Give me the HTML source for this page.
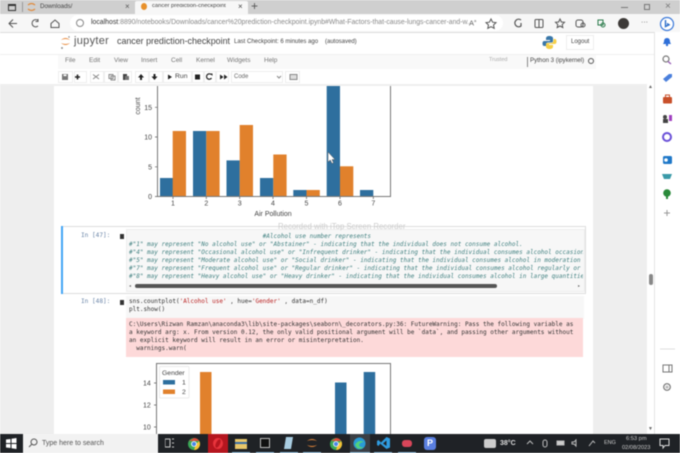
<!DOCTYPE html>
<html><head><meta charset="utf-8">
<style>
html,body{margin:0;padding:0;background:#fff}
#r{position:relative;width:680px;height:453px;overflow:hidden;font-family:"Liberation Sans",sans-serif;color:#444;background:#fff;filter:blur(.5px)}
#r div,#r svg{position:absolute}
.t{position:absolute;white-space:pre;line-height:1}
.m{font-family:"DejaVu Sans Mono","Liberation Mono",monospace;font-size:6px;white-space:pre;position:absolute;line-height:8px}
.b{background:#fff;border:1px solid #eee;box-sizing:border-box;height:12px;top:71px}
.c{font-style:italic;color:#408080}
.s{color:#ba2121}
</style></head><body>
<div id="r">
<!-- tabs -->
<div style="left:0;top:0;width:680px;height:14px;background:#cfcfcf"></div>
<div style="left:135px;top:1px;width:113px;height:13px;background:#f7f7f7;border-radius:2px 2px 0 0"></div>
<div style="left:8px;top:4px;width:8px;height:7px;border:1px solid #333;border-top-width:2px;box-sizing:border-box"></div>
<div style="left:22px;top:2px;width:1px;height:10px;background:#999"></div>
<svg style="left:27px;top:2px" width="9" height="10"><path d="M1 3Q4.5 0 8 3M1 7Q4.5 10 8 7" stroke="#e08a3c" fill="none" stroke-width="1.200"/></svg>
<span class="t" style="left:40px;top:4px;font-size:6.200px;color:#444">Downloads/</span>
<span class="t" style="left:125px;top:3px;font-size:8px;color:#555">×</span>
<div style="left:141px;top:3px;width:6px;height:7px;background:#e8902a;border-radius:50%"></div>
<span class="t" style="left:152px;top:4px;width:74px;overflow:hidden;font-size:5.800px;color:#444">cancer prediction-checkpoint - J</span>
<span class="t" style="left:238px;top:3px;font-size:8px;color:#444">×</span>
<span class="t" style="left:251px;top:0;font-size:12px;color:#555">+</span>
<div style="left:621px;top:7px;width:7px;height:1px;background:#777"></div>
<div style="left:644px;top:4px;width:6px;height:6px;border:1px solid #777;box-sizing:border-box"></div>
<span class="t" style="left:665px;top:2px;font-size:10px;color:#777">×</span>
<!-- address bar -->
<div style="left:0;top:14px;width:680px;height:18px;background:#f7f7f7"></div>
<div style="left:70px;top:15px;width:433px;height:16px;background:#fff;border-radius:8px"></div>
<svg style="left:8px;top:18px" width="60" height="11" fill="none" stroke="#555" stroke-width="1"><path d="M9 5.500H1M5 1.500L1 5.500L5 9.500"/><path d="M30 2.500A3.600 3.600 0 1 0 30 8M30 1V3.500H27.500"/><path d="M43 5.500L47 2L51 5.500V9.500H43Z"/></svg>
<div style="left:76px;top:19px;width:8px;height:8px;border:1px solid #888;border-radius:50%;box-sizing:border-box"></div>
<span class="t" style="left:91px;top:20px;font-size:6.900px;color:#888"><span style="color:#333">localhost</span>:8890/notebooks/Downloads/cancer%20prediction-checkpoint.ipynb#What-Factors-that-cause-lungs-cancer-and-w...</span>
<span class="t" style="left:469px;top:19px;font-size:7.500px;color:#666">A<sup style="font-size:4px">a</sup></span>
<svg style="left:485px;top:17px" width="125" height="13" fill="none" stroke="#555" stroke-width="1"><path d="M6 2L7.600 5.200L11 5.600L8.500 8L9.200 11.300L6 9.700L2.800 11.300L3.500 8L1 5.600L4.400 5.200Z"/><path d="M36 3A3.800 3.800 0 1 0 36 9V6" stroke-width="1.200"/><rect x="50" y="2.500" width="8" height="8" rx="1"/><path d="M54 2.500V10.500"/><path d="M75 2L76.400 5L79.500 5.300L77.200 7.500L77.800 10.500L75 9L72.200 10.500L72.800 7.500L70.500 5.300L73.600 5Z"/><rect x="91" y="3" width="7" height="7" rx="2"/><circle cx="98" cy="8" r="2"/><path d="M113 3H118V8H113Z" stroke="#2a7a4a"/><circle cx="118" cy="8" r="2" stroke="#2a7a4a"/></svg>
<div style="left:618px;top:18px;width:11px;height:11px;border-radius:50%;background:#3d3a38"></div>
<span class="t" style="left:641px;top:19px;font-size:7px;color:#555">···</span>
<div style="left:0;top:32px;width:655px;height:1px;background:#ddd"></div>
<!-- jupyter header -->
<svg style="left:60px;top:35px" width="12" height="15"><path d="M1 5Q5.500 1 10 5Q5.500 3 1 5ZM1 8Q5.500 12 10 8Q5.500 10 1 8Z" fill="#e8883a"/><circle cx="2" cy="13" r=".9" fill="#777"/><circle cx="9" cy="2" r=".7" fill="#777"/></svg>
<span class="t" style="left:74px;top:36px;font-size:11px;letter-spacing:.3px;color:#555">jupyter</span>
<span class="t" style="left:117px;top:37px;font-size:8.900px;color:#444">cancer prediction-checkpoint</span>
<span class="t" style="left:234px;top:39px;font-size:6px;color:#444">Last Checkpoint: 6 minutes ago</span>
<span class="t" style="left:325px;top:39px;font-size:6px;color:#444">(autosaved)</span>
<svg style="left:542px;top:35px" width="15" height="15" viewBox="0 0 15 15"><path d="M7.500 1C5 1 4 2 4 3.500V5H8V6H2.500C1 6 .5 7 .5 8.500S1 11 2.500 11H4V9.500C4 8 5 7.500 6 7.500H9.500C10.500 7.500 11 7 11 6V3C11 2 9.500 1 7.500 1Z" fill="#3a77a8"/><path d="M7.500 14C10 14 11 13 11 11.500V10H7V9H12.500C14 9 14.500 8 14.500 6.500S14 4 12.500 4H11.500V5.500C11.500 7 10.500 8 9 8H5.500C4.500 8 4 8.500 4 9.500V12C4 13 5.500 14 7.500 14Z" fill="#f5cf47"/></svg>
<div style="left:566px;top:35px;width:28px;height:15px;border:1px solid #eee;box-sizing:border-box;background:#fff"></div>
<span class="t" style="left:571px;top:39px;font-size:6px;color:#444">Logout</span>
<!-- menu -->
<div style="left:0;top:54px;width:655px;height:1px;background:#f0f0f0"></div>
<div style="left:58px;top:55px;width:538px;height:14px;background:#f9f9f9"></div>
<span class="t" style="left:65px;top:58px;font-size:6.500px;color:#777">File</span>
<span class="t" style="left:89px;top:58px;font-size:6.500px;color:#777">Edit</span>
<span class="t" style="left:114px;top:58px;font-size:6.500px;color:#777">View</span>
<span class="t" style="left:141px;top:58px;font-size:6.500px;color:#777">Insert</span>
<span class="t" style="left:171px;top:58px;font-size:6.500px;color:#777">Cell</span>
<span class="t" style="left:196px;top:58px;font-size:6.500px;color:#777">Kernel</span>
<span class="t" style="left:227px;top:58px;font-size:6.500px;color:#777">Widgets</span>
<span class="t" style="left:264px;top:58px;font-size:6.500px;color:#777">Help</span>
<span class="t" style="left:489px;top:58px;font-size:5.500px;color:#aaa">Trusted</span>
<div style="left:527px;top:57px;width:1px;height:10px;background:#888"></div>
<span class="t" style="left:530px;top:58px;font-size:6.100px;color:#444">Python 3 (ipykernel)</span>
<div style="left:588px;top:58px;width:6px;height:6px;border:1px solid #555;border-radius:50%;box-sizing:border-box"></div>
<!-- toolbar -->
<div class="b" style="left:58px;width:15px"></div><div class="b" style="left:74px;width:13px"></div>
<div class="b" style="left:90px;width:14px"></div><div class="b" style="left:104px;width:14px"></div><div class="b" style="left:118px;width:14px"></div>
<div class="b" style="left:135px;width:14px"></div><div class="b" style="left:149px;width:14px"></div>
<div class="b" style="left:163px;width:29px"></div><div class="b" style="left:192px;width:12px"></div><div class="b" style="left:204px;width:12px"></div><div class="b" style="left:216px;width:13px"></div>
<div class="b" style="left:231px;width:52px"></div><div class="b" style="left:285px;width:15px"></div>
<svg style="left:58px;top:71px" width="245" height="12">
<rect x="4" y="3" width="6" height="6" fill="#777"/><rect x="5.500" y="3.500" width="3" height="1.600" fill="#fff"/>
<path d="M35 3.500L41 8M35 8L41 3.500" stroke="#888"/><rect x="51" y="3.500" width="4" height="4" fill="none" stroke="#888"/><rect x="53" y="5" width="4" height="4" fill="none" stroke="#888"/>
<rect x="65" y="3" width="4" height="6" fill="#444"/><rect x="67" y="5" width="4" height="4" fill="#777"/>
<path d="M83 3L80 6.500H82V9H84V6.500H86Z" fill="#222"/><path d="M96.500 9L93.500 5.500H95.500V3H97.500V5.500H99.500Z" fill="#222"/>
<path d="M110 3.500L114 6L110 8.500Z" fill="#222"/>
<rect x="137" y="3.500" width="5" height="5" fill="#222"/>
<path d="M153 3.500A2.700 2.700 0 1 0 153.500 7" fill="none" stroke="#222" stroke-width="1.200"/><path d="M152 2.500L154.500 2.500V5Z" fill="#222"/>
<path d="M162 3.500L165.500 6L162 8.500ZM166 3.500L169.500 6L166 8.500Z" fill="#222"/>
<path d="M219 5L221 7L223 5" stroke="#888" fill="none"/>
<rect x="232" y="3.500" width="7" height="5" fill="#ddd" stroke="#888"/>
<path d="M19.500 3.500V8.500M17 6H22" stroke="#222" stroke-width="1.500"/>
</svg>
<span class="t" style="left:175px;top:74px;font-size:6.800px;color:#444">Run</span>
<span class="t" style="left:234px;top:74px;font-size:6px;color:#666">Code</span>
<!-- page background -->
<div style="left:0;top:86px;width:54px;height:348px;background:#eeeeee"></div>
<div style="left:593px;top:86px;width:54px;height:348px;background:#eeeeee"></div>
<div style="left:0;top:84px;width:647px;height:2px;background:#efefef"></div>
<!-- side scroll -->
<div style="left:654px;top:32px;width:1px;height:402px;background:#e4e4e4"></div>
<span class="t" style="left:648px;top:85px;font-size:5px;color:#666">▲</span>
<span class="t" style="left:648px;top:427px;font-size:5px;color:#666">▼</span>
<div style="left:649px;top:274px;width:4px;height:11px;background:#888;border-radius:2px"></div>
<!-- chart 1 -->
<svg style="left:120px;top:86px" width="300" height="140">
<g fill="#2e6f9e">
<rect x="40" y="92" width="13" height="18"/><rect x="73" y="45" width="13.300" height="65"/><rect x="106.500" y="74.400" width="13.300" height="35.600"/><rect x="140" y="92" width="13.300" height="18"/><rect x="173.300" y="104" width="13.300" height="6"/><rect x="206.700" y="-1" width="13.300" height="111"/><rect x="240" y="104" width="13.300" height="6"/></g>
<g fill="#e1812c">
<rect x="52.700" y="45" width="13.300" height="65"/><rect x="86.300" y="45" width="13.300" height="65"/><rect x="119.700" y="39" width="13.300" height="71"/><rect x="153.300" y="68.500" width="13.300" height="41.500"/><rect x="186.500" y="104" width="13.300" height="6"/><rect x="220" y="80.300" width="13.300" height="29.700"/></g>
<path d="M37.500 0V110.500H270.500V0" fill="none" stroke="#777" stroke-width="1"/>
<path d="M35 110.500H37M35 80.800H37M35 51H37M35 21.300H37M53 111V113M86.300 111V113M119.700 111V113M153 111V113M186.500 111V113M220 111V113M253.300 111V113" stroke="#555" stroke-width=".7"/>
<g font-family="Liberation Sans,sans-serif" font-size="7" fill="#444" text-anchor="middle">
<text x="53" y="119.500">1</text><text x="86.300" y="119.500">2</text><text x="119.700" y="119.500">3</text><text x="153" y="119.500">4</text><text x="186.500" y="119.500">5</text><text x="220" y="119.500">6</text><text x="253.300" y="119.500">7</text>
<text x="153" y="130">Air Pollution</text>
<text x="32" y="113" text-anchor="end">0</text><text x="32" y="83.300" text-anchor="end">5</text><text x="32" y="53.500" text-anchor="end">10</text><text x="32" y="24" text-anchor="end">15</text>
<text transform="translate(20,20) rotate(-90)" x="0" y="0">count</text></g>
<path d="M208 66V76L210.300 74L212 77.500L213.500 76.800L212 73.500H215Z" fill="#fff" stroke="#555" stroke-width=".5"/>
</svg>
<!-- cell 47 -->
<div style="left:61px;top:226px;width:525px;height:68px;border:1px solid #ddd;box-sizing:border-box;background:#fff"></div>
<div style="left:61px;top:226px;width:2px;height:68px;background:#42a5f5"></div>
<div style="left:126px;top:229px;width:459px;height:63px;background:#f7f7f7;border:1px solid #eee;box-sizing:border-box"></div>
<span class="t" style="left:278px;top:223px;font-size:7.800px;color:#ccc">Recorded with iTop Screen Recorder</span>
<span class="m" style="left:81px;top:232px;color:#6a85a8;font-size:6.100px">In [47]:</span>
<div style="left:120px;top:234px;width:4px;height:5px;background:#333"></div>
<div style="left:129px;top:232px;width:454px;height:50px;overflow:hidden">
<span class="m c" style="left:0;top:1px">                                     #Alcohol use number represents
#"1" may represent "No alcohol use" or "Abstainer" - indicating that the individual does not consume alcohol.
#"4" may represent "Occasional alcohol use" or "Infrequent drinker" - indicating that the individual consumes alcohol occasionally
#"5" may represent "Moderate alcohol use" or "Social drinker" - indicating that the individual consumes alcohol in moderation
#"7" may represent "Frequent alcohol use" or "Regular drinker" - indicating that the individual consumes alcohol regularly or
#"8" may represent "Heavy alcohol use" or "Heavy drinker" - indicating that the individual consumes alcohol in large quantities</span>
</div>
<div style="left:135px;top:284px;width:362px;height:4px;background:#555;border-radius:2px"></div>
<span class="t" style="left:129px;top:284px;font-size:4px;color:#666">◂</span>
<span class="t" style="left:578px;top:284px;font-size:4px;color:#666">▸</span>
<!-- cell 48 -->
<div style="left:126px;top:296px;width:458px;height:23px;background:#f7f7f7"></div>
<span class="m" style="left:81px;top:298px;color:#6a85a8;font-size:6.100px">In [48]:</span>
<div style="left:120px;top:300px;width:4px;height:5px;background:#333"></div>
<span class="m" style="left:129px;top:298px;color:#333">sns.countplot(<span class="s">'Alcohol use'</span> , hue=<span class="s">'Gender'</span> , data=n_df)
plt.show()</span>
<div style="left:126px;top:318px;width:457px;height:39px;background:#fdd9d9"></div>
<span class="m" style="left:129px;top:321px;color:#333">C:\Users\Rizwan Ramzan\anaconda3\lib\site-packages\seaborn\_decorators.py:36: FutureWarning: Pass the following variable as
a keyword arg: x. From version 0.12, the only valid positional argument will be `data`, and passing other arguments without
an explicit keyword will result in an error or misinterpretation.
  warnings.warn(</span>
<!-- chart 2 -->
<svg style="left:130px;top:360px" width="270" height="74">
<rect x="70" y="12" width="11.500" height="62" fill="#e1812c"/>
<rect x="205" y="22.500" width="11.500" height="52" fill="#2e6f9e"/>
<rect x="233.700" y="12" width="11.500" height="62" fill="#2e6f9e"/>
<path d="M26.500 74V3.500H260.500V74" fill="none" stroke="#777" stroke-width="1"/>
<path d="M24 23H26M24 45H26M24 67H26" stroke="#555" stroke-width=".7"/>
<rect x="29.500" y="6.500" width="29.500" height="31.500" fill="#fff" stroke="#e4e4e4" stroke-width=".7" rx="1"/>
<rect x="33" y="20" width="12" height="4.500" fill="#2e6f9e"/><rect x="33" y="29.500" width="12" height="4.500" fill="#e1812c"/>
<g font-family="Liberation Sans,sans-serif" font-size="6.800" fill="#444"><text x="32" y="15">Gender</text><text x="52" y="24.500">1</text><text x="52" y="34">2</text>
<text x="13" y="25.500" font-size="7">14</text><text x="13" y="47.500" font-size="7">12</text><text x="13" y="69.500" font-size="7">10</text></g>
</svg>
<!-- taskbar -->
<div style="left:0;top:434px;width:680px;height:19px;background:#1f2226"></div>
<div style="left:23px;top:434px;width:135px;height:19px;background:#f2f2f2"></div>
<svg style="left:6px;top:438px" width="11" height="11"><path d="M0 1.500L4.500 1V5H0ZM5.500 .8L10.500 0V5H5.500ZM0 6H4.500V10L0 9.500ZM5.500 6H10.500V11L5.500 10.200Z" fill="#fff"/></svg>
<svg style="left:28px;top:438px" width="10" height="10"><circle cx="6" cy="4" r="3" fill="none" stroke="#555"/><path d="M3.800 6.200L1 9" stroke="#555"/></svg>
<span class="t" style="left:42px;top:440px;font-size:7px;color:#555">Type here to search</span>
<svg style="left:165px;top:438px" width="10" height="10"><rect x="0" y="1" width="5" height="8" fill="none" stroke="#ccc"/><path d="M7 1H9M7 5H9M7 9H9" stroke="#ccc"/></svg>
<div style="left:208px;top:434px;width:20px;height:19px;background:#b5161f"></div>
<div style="left:350px;top:434px;width:20px;height:19px;background:#3b3f45"></div>
<svg style="left:185px;top:436px" width="18" height="16"><circle cx="9" cy="8" r="6" fill="#3aa757"/><path d="M9 2A6 6 0 0 1 14.200 5H4Z" fill="#de4b3a"/><path d="M14.200 5A6 6 0 0 1 9 14L11 8Z" fill="#f5c336"/><circle cx="9" cy="8" r="2.500" fill="#4a86e8" stroke="#fff" stroke-width=".8"/></svg>
<svg style="left:327px;top:436px" width="18" height="16"><circle cx="9" cy="8" r="6" fill="#3aa757"/><path d="M9 2A6 6 0 0 1 14.200 5H4Z" fill="#de4b3a"/><path d="M14.200 5A6 6 0 0 1 9 14L11 8Z" fill="#f5c336"/><circle cx="9" cy="8" r="2.500" fill="#4a86e8" stroke="#fff" stroke-width=".8"/></svg>
<svg style="left:212px;top:437px" width="12" height="13"><ellipse cx="6" cy="6.500" rx="5" ry="5.500" fill="#e8343c"/><ellipse cx="6" cy="6.500" rx="2" ry="4.500" fill="#b5161f" transform="rotate(25 6 6.500)"/></svg>
<svg style="left:235px;top:437px" width="12" height="13"><rect x="0" y="2" width="12" height="10" fill="#e8c76a"/><rect x="0" y="5" width="12" height="2" fill="#3a6ea5"/></svg>
<div style="left:260px;top:438px;width:10px;height:10px;background:#111;border:1px solid #bbb;box-sizing:border-box"></div>
<svg style="left:283px;top:437px" width="11" height="13"><path d="M3 0H10L8 12H1Z" fill="#a9cde2"/></svg>
<svg style="left:306px;top:437px" width="12" height="13"><path d="M1 4Q6 0 11 4Q6 2 1 4ZM1 8Q6 12 11 8Q6 10 1 8Z" fill="#e8883a"/></svg>
<svg style="left:352px;top:436px" width="15" height="15"><circle cx="7.500" cy="7.500" r="6" fill="#2a9bd6"/><path d="M3 9Q6 3 12 6Q8 6 7 9Q8 12 12 11Q8 14 5 12Z" fill="#52d17c"/></svg>
<svg style="left:377px;top:436px" width="13" height="14"><path d="M9.500 1L13 2.500V11.500L9.500 13L3 7.500Z M9.500 4.500L6 7.500L9.500 10Z M0 5L1.500 4L4 6.500L1.500 10L0 9Z" fill="#2f9ce0" fill-rule="evenodd"/></svg>
<div style="left:402px;top:440px;width:10px;height:7px;background:#d9465a;border-radius:3px"></div>
<div style="left:424px;top:437px;width:12px;height:13px;background:#5a7fe0;border-radius:3px;color:#fff;font-size:9px;font-weight:bold;text-align:center;line-height:13px">P</div>
<div style="left:232px;top:452px;width:18px;height:1px;background:#7fb0d0"></div>
<div style="left:256px;top:452px;width:18px;height:1px;background:#7fb0d0"></div>
<div style="left:280px;top:452px;width:18px;height:1px;background:#7fb0d0"></div>
<div style="left:303px;top:452px;width:18px;height:1px;background:#7fb0d0"></div>
<div style="left:350px;top:452px;width:20px;height:1px;background:#7fb0d0"></div>
<div style="left:374px;top:452px;width:18px;height:1px;background:#7fb0d0"></div>
<div style="left:398px;top:452px;width:18px;height:1px;background:#7fb0d0"></div>
<div style="left:484px;top:439px;width:12px;height:9px;background:#ccc;border-radius:2px"></div>
<span class="t" style="left:500px;top:440px;font-size:7px;font-weight:bold;color:#ddd">38°C</span>
<svg style="left:526px;top:438px" width="80" height="10" fill="none" stroke="#bbb"><path d="M1 6L4 3L7 6"/><rect x="17" y="2" width="4" height="7" rx="2"/><rect x="31" y="3" width="7" height="4" fill="#ccc"/><path d="M46 4H48L50 2V8L48 6H46Z"/><path d="M63 8L67 3L69 5"/></svg>
<span class="t" style="left:604px;top:441px;font-size:5.500px;color:#ccc">ENG</span>
<span class="t" style="left:626px;top:437px;font-size:5.700px;color:#ccc">6:53 pm</span>
<span class="t" style="left:622px;top:446px;font-size:5.700px;color:#ccc">02/08/2023</span>
<svg style="left:659px;top:438px" width="11" height="11"><path d="M1 1H10V7.500H6L4 10V7.500H1Z" fill="none" stroke="#ddd"/></svg>
<!-- edge sidebar -->
<svg style="left:655px;top:14px" width="25" height="420">
<circle cx="12" cy="10" r="6.500" fill="#fff" stroke="#3a78d8" stroke-width="1.200"/><path d="M10.500 6V12.500L14 10.800L12 9.500" fill="none" stroke="#2a6cc8" stroke-width="1.400"/>
<path d="M12 24C9.500 24 9 26 9 28L8 30H16L15 28C15 26 14.500 24 12 24Z" fill="#2f6fd8"/><circle cx="12" cy="31" r="1.200" fill="#2f6fd8"/>
<circle cx="11" cy="45" r="3" fill="none" stroke="#777" stroke-width="1.200"/><path d="M13 47.500L16 50" stroke="#9a5fb8" stroke-width="1.400"/>
<path d="M8 65L14 60H17V63L11 68Z" fill="#4a7fdc"/>
<rect x="8" y="83" width="9" height="6.500" fill="#c8502a" rx="1"/><path d="M10.500 83V81H14.500V83" fill="none" stroke="#c8502a"/>
<circle cx="10" cy="103" r="2" fill="#444"/><rect x="8" y="105" width="5" height="4" fill="#444"/><rect x="14" y="101" width="3" height="6" fill="#a040c0"/>
<circle cx="12" cy="123" r="4" fill="none" stroke="#6a50d8" stroke-width="2"/>
<rect x="8" y="142" width="9" height="8" rx="1.500" fill="#1f78c8"/><circle cx="11" cy="146" r="1.800" fill="#fff"/>
<path d="M7 160H17L15 165H9Z" fill="#3a9aa8"/>
<circle cx="12" cy="179" r="3.800" fill="#2a8a3a"/><rect x="11" y="182" width="2" height="3" fill="#2a8a3a"/>
<path d="M12 196V202M9 199H15" stroke="#999"/>
<path d="M5 335H20" stroke="#ddd"/>
<rect x="8" y="351" width="9" height="7" fill="none" stroke="#777"/><path d="M14 351V358" stroke="#777"/>
<circle cx="12" cy="373" r="3.300" fill="none" stroke="#777" stroke-width="1.200"/><circle cx="12" cy="373" r="1" fill="none" stroke="#777" stroke-width=".6"/>
</svg>
</div>
</body></html>
